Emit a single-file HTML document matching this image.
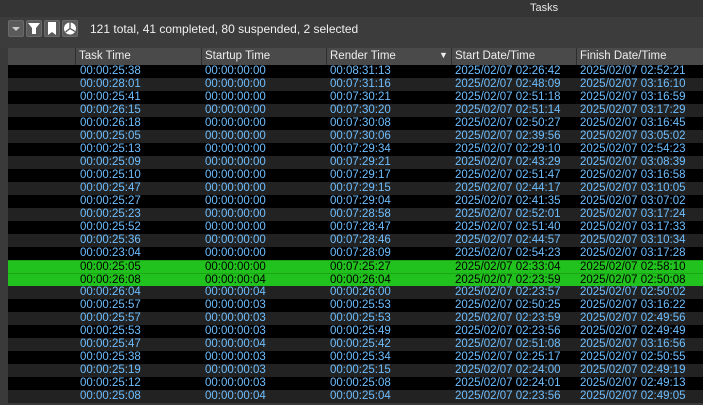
<!DOCTYPE html>
<html><head><style>
*{margin:0;padding:0;box-sizing:border-box}
body{width:703px;height:405px;overflow:hidden;background:#383838;font-family:"Liberation Sans",sans-serif;font-size:11px;position:relative}
.title{position:absolute;left:0;top:0;width:703px;height:17px;background:#353535;color:#e8e8e8;font-size:11px}
.title span{position:absolute;left:530px;top:2px}
.tb{position:absolute;left:0;top:17px;width:703px;height:31px;background:#3c3c3c}
.btn{position:absolute;top:3px;width:16px;height:17px;background:#5a5a5a;border:1px solid #6a6a6a;border-radius:2px}
.stat{position:absolute;left:90px;top:5px;color:#f0f0f0;font-size:12px}
.side{position:absolute;left:0;top:48px;width:8px;height:357px;background:#3a3a3a}
.hdr{position:absolute;left:8px;top:48px;width:695px;height:17px;background:#4a4a4a;color:#eee;font-size:11.5px}
.hdr div{position:absolute;top:0;height:17px;border-left:1px solid #2e2e2e;padding:2px 0 0 3px}
.rows{position:absolute;left:8px;top:65px;width:695px}
.r{height:13px;position:relative;color:#6ebeff;font-size:11.5px;line-height:13px}
.r:nth-child(odd){background:#000}.r:nth-child(even){background:#222}
.r.g{background:#22c21e;color:#000;border-top:1px solid #1aa518}
.r span{position:absolute;top:0}
</style></head><body>
<div class="title"><span>Tasks</span></div>
<div class="tb">
<div class="btn" style="left:8px"><svg width="14" height="15"><path d="M3 6h8l-4 4z" fill="#ccc"/></svg></div>
<div class="btn" style="left:26px"><svg width="14" height="15"><path d="M1 2h12l-4 5v6h-4v-6z" fill="#fff"/></svg></div>
<div class="btn" style="left:44px"><svg width="14" height="15"><path d="M3 1h8v13l-4-3l-4 3z" fill="#fff"/></svg></div>
<div class="btn" style="left:62px"><svg width="14" height="15"><circle cx="7" cy="7.5" r="6" fill="#fff"/><path d="M7 7.5V1.5M7 7.5L12 10.5M7 7.5L2.5 11" stroke="#555" stroke-width="1.3"/></svg></div>
<div class="stat">121 total, 41 completed, 80 suspended, 2 selected</div>
</div>
<div class="side"></div>
<div class="hdr">
<div style="left:0;border:none"></div>
<div style="left:67px;width:126px">Task Time</div>
<div style="left:193px;width:125px">Startup Time</div>
<div style="left:318px;width:125px">Render Time<span style="position:absolute;left:112px;top:2px;font-size:9px">▼</span></div>
<div style="left:443px;width:125px">Start Date/Time</div>
<div style="left:568px;width:126px">Finish Date/Time</div>
</div>
<div class="rows" id="rows"></div>
<script>
var d=[["00:00:25:38","00:00:00:00","00:08:31:13","02:26:42","02:52:21"],
["00:00:28:01","00:00:00:00","00:07:31:16","02:48:09","03:16:10"],
["00:00:25:41","00:00:00:00","00:07:30:21","02:51:18","03:16:59"],
["00:00:26:15","00:00:00:00","00:07:30:20","02:51:14","03:17:29"],
["00:00:26:18","00:00:00:00","00:07:30:08","02:50:27","03:16:45"],
["00:00:25:05","00:00:00:00","00:07:30:06","02:39:56","03:05:02"],
["00:00:25:13","00:00:00:00","00:07:29:34","02:29:10","02:54:23"],
["00:00:25:09","00:00:00:00","00:07:29:21","02:43:29","03:08:39"],
["00:00:25:10","00:00:00:00","00:07:29:17","02:51:47","03:16:58"],
["00:00:25:47","00:00:00:00","00:07:29:15","02:44:17","03:10:05"],
["00:00:25:27","00:00:00:00","00:07:29:04","02:41:35","03:07:02"],
["00:00:25:23","00:00:00:00","00:07:28:58","02:52:01","03:17:24"],
["00:00:25:52","00:00:00:00","00:07:28:47","02:51:40","03:17:33"],
["00:00:25:36","00:00:00:00","00:07:28:46","02:44:57","03:10:34"],
["00:00:23:04","00:00:00:00","00:07:28:09","02:54:23","03:17:28"],
["00:00:25:05","00:00:00:00","00:07:25:27","02:33:04","02:58:10",1],
["00:00:26:08","00:00:00:04","00:00:26:04","02:23:59","02:50:08",1],
["00:00:26:04","00:00:00:04","00:00:26:00","02:23:57","02:50:02"],
["00:00:25:57","00:00:00:03","00:00:25:53","02:50:25","03:16:22"],
["00:00:25:57","00:00:00:03","00:00:25:53","02:23:59","02:49:56"],
["00:00:25:53","00:00:00:03","00:00:25:49","02:23:56","02:49:49"],
["00:00:25:47","00:00:00:04","00:00:25:42","02:51:08","03:16:56"],
["00:00:25:38","00:00:00:03","00:00:25:34","02:25:17","02:50:55"],
["00:00:25:19","00:00:00:03","00:00:25:15","02:24:00","02:49:19"],
["00:00:25:12","00:00:00:03","00:00:25:08","02:24:01","02:49:13"],
["00:00:25:08","00:00:00:04","00:00:25:04","02:23:56","02:49:05"]];
var h="";d.forEach(function(r){h+='<div class="r'+(r[5]?' g':'')+'"><span style="left:72px">'+r[0]+'</span><span style="left:197px">'+r[1]+'</span><span style="left:322px">'+r[2]+'</span><span style="left:447px">2025/02/07 '+r[3]+'</span><span style="left:572px">2025/02/07 '+r[4]+'</span></div>'});
document.getElementById("rows").innerHTML=h;
</script>
</body></html>
